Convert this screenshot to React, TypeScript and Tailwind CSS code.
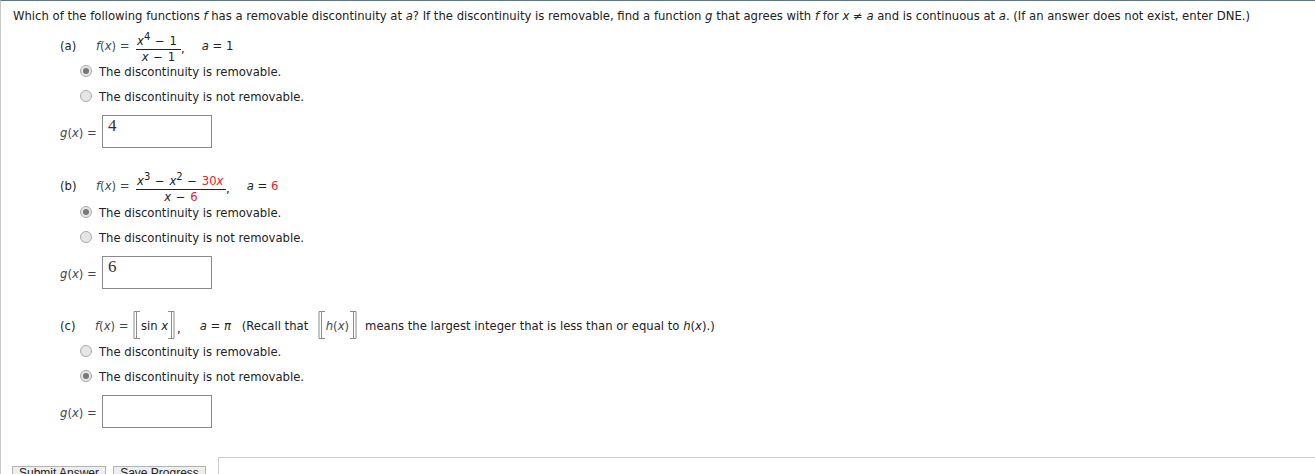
import React from 'react';

const mathColor = 'text-[#3d4a55]';

function Radio({ checked }: { checked: boolean }) {
  return (
    <span className="flex h-[12px] w-[12px] shrink-0 items-center justify-center rounded-full border border-[#ababab] bg-[#e6e6e6]">
      {checked && <span className="h-[6px] w-[6px] rounded-full bg-[#777]" />}
    </span>
  );
}

function Choice({ text, checked }: { text: string; checked: boolean }) {
  return (
    <div className="ml-[79px] flex h-[18px] items-center gap-[7px]">
      <Radio checked={checked} />
      <span className="mt-[1px]">{text}</span>
    </div>
  );
}

function Fraction({ num, den, width }: { num: React.ReactNode; den: React.ReactNode; width: string }) {
  return (
    <span className={`mt-[5px] flex flex-col items-center ${width}`}>
      <span className="flex h-[19px] w-full items-end justify-start whitespace-pre border-b border-[#222] pl-[1px] leading-[16px] [word-spacing:1px]">{num}</span>
      <span className="h-[14px] whitespace-pre leading-[14px] [word-spacing:1px]">{den}</span>
    </span>
  );
}

function DoubleBracket({ right }: { right?: boolean }) {
  return (
    <svg width="8" height="28" viewBox="0 0 8 28" className={`shrink-0 ${right ? '-scale-x-100' : ''}`} fill="none" stroke="#8c8c8c">
      <path d="M7 0.5H1V27.5H7" />
      <path d="M3.5 1V27" />
    </svg>
  );
}

function Part({
  label,
  formula,
  first,
  value,
  lower,
}: {
  label: string;
  formula: React.ReactNode;
  first: boolean;
  value: string;
  lower?: boolean;
}) {
  return (
    <div className="h-[140px]">
      <div className="ml-[59px] flex h-[30px] items-center whitespace-pre">
        <span className="mt-[1px] w-[36px]">{label}</span>
        {formula}
      </div>
      <div className={`flex flex-col gap-[7px] ${lower ? 'mt-[3px]' : 'mt-[2px]'}`}>
        <Choice text="The discontinuity is removable." checked={first} />
        <Choice text="The discontinuity is not removable." checked={!first} />
      </div>
      <div className="ml-[59px] mt-[10px] flex items-center">
        <span className={`mt-[2px] w-[42px] whitespace-pre ${mathColor}`}>
          <i>g</i>(<i>x</i>) =
        </span>
        <div className="h-[33px] w-[110px] border border-[#8a8a8a] bg-white px-[5px] font-['Liberation_Serif',serif] text-[17px] leading-[20px] text-[#333]">
          {value}
        </div>
      </div>
    </div>
  );
}

export default function App() {
  return (
    <div className="h-[474px] w-[1315px] overflow-hidden border-l border-t border-l-[#c8c8c8] border-t-[#5f7888] bg-white font-['DejaVu_Sans',sans-serif] text-[11.63px] leading-[18px] text-[#222]">
      <p className="ml-[12px] mt-[6px] h-[23px] whitespace-pre">
        Which of the following functions <i>f</i> has a removable discontinuity at <i>a</i>? If the discontinuity is removable, find a function <i>g</i> that agrees with <i>f</i> for <i>x</i> ≠ <i>a</i> and is continuous at <i>a</i>. (If an answer does not exist, enter DNE.)
      </p>
      <Part
        label="(a)"
        first
        value="4"
        formula={
          <>
            <span className={`mt-[1px] w-[40px] ${mathColor}`}><i>f</i>(<i>x</i>) =</span>
            <Fraction
              width="w-[45px]"
              num={<span><i>x</i><sup className="text-[10px]">4</sup> − 1</span>}
              den={<span><i>x</i> − 1</span>}
            />
            <span className="mt-[7px]">,</span>
            <span className="ml-[17px] mt-[1px]"><i>a</i> = 1</span>
          </>
        }
      />
      <Part
        label="(b)"
        first
        lower
        value="6"
        formula={
          <>
            <span className={`mt-[1px] w-[40px] ${mathColor}`}><i>f</i>(<i>x</i>) =</span>
            <Fraction
              width="w-[90px]"
              num={<span><i>x</i><sup className="text-[10px]">3</sup> − <i>x</i><sup className="text-[10px]">2</sup> − <span className="text-[#e8202a]">30<i>x</i></span></span>}
              den={<span><i>x</i> − <span className="text-[#e8202a]">6</span></span>}
            />
            <span className="mt-[7px]">,</span>
            <span className="ml-[17px] mt-[1px]"><i>a</i> = <span className="text-[#e8202a]">6</span></span>
          </>
        }
      />
      <Part
        label="(c)"
        first={false}
        value=""
        formula={
          <>
            <span className={`-ml-[1px] mt-[1px] w-[38px] ${mathColor}`}><i>f</i>(<i>x</i>) =</span>
            <DoubleBracket />
            <span className="mt-[1px] w-[26px] whitespace-pre">sin <i>x</i></span>
            <DoubleBracket right />
            <span className="ml-[2px] mt-[7px]">,</span>
            <span className="ml-[19px] mt-[1px] w-[33px]"><i>a</i> = <i>π</i></span>
            <span className="ml-[9px] mt-[1px] w-[67px]">(Recall that</span>
            <span className="ml-[9px] flex items-center">
              <DoubleBracket />
              <span className={`mt-[1px] ${mathColor}`}><i>h</i>(<i>x</i>)</span>
              <DoubleBracket right />
            </span>
            <span className="ml-[8px] mt-[1px]">means the largest integer that is less than or equal to <i>h</i>(<i>x</i>).)</span>
          </>
        }
      />
      <div className="mt-[7px] flex items-start">
        <div className="ml-[11px] mt-[9px] flex gap-[7px] font-['Liberation_Sans',sans-serif] text-[12px]">
          <button className="flex h-[16px] w-[94px] items-start justify-center border border-[#b4b4b4] bg-[#eee] leading-[13px] text-[#222]">Submit Answer</button>
          <button className="flex h-[16px] w-[93px] items-start justify-center border border-[#b4b4b4] bg-[#eee] leading-[13px] text-[#222]">Save Progress</button>
        </div>
        <div className="ml-[12px] h-[40px] flex-1 border-l border-t border-[#ccc]" />
      </div>
    </div>
  );
}
